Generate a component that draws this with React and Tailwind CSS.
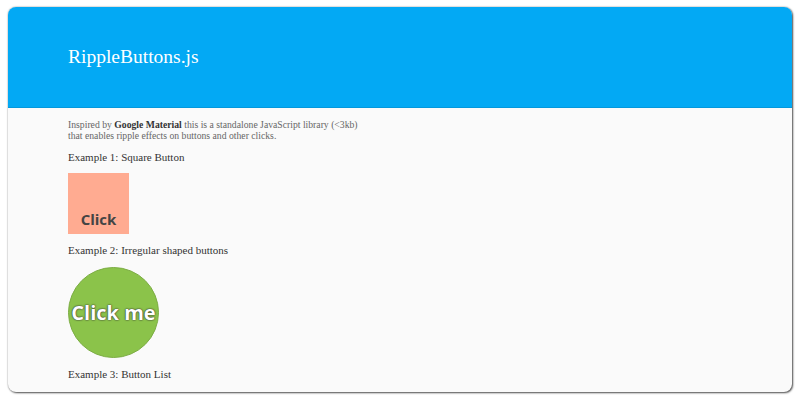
export default function App() {
    return (
        <div className="w-[800px] h-[400px] bg-white pt-[7px] px-[8px]">
            <div className="h-[385px] rounded-[8px] overflow-hidden bg-[#fafafa] shadow-[0_0_2px_rgba(0,0,0,0.35),1px_1px_2px_rgba(0,0,0,0.65)]">
                {/* header */}
                <div className="h-[101px] bg-[#03a9f4] border-b border-[#0398dc] flex items-center pl-[60px]">
                    <h1 className="text-white text-[19.5px] font-['Liberation_Serif',serif]">RippleButtons.js</h1>
                </div>

                <div className="pl-[60px] pt-[11px] font-['Liberation_Serif',serif]">
                    <p className="text-[9.7px] leading-[11px] text-[#666]">
                        Inspired by <b className="text-[#333]">Google Material</b> this is a standalone JavaScript library (&lt;3kb)
                        <br />
                        that enables ripple effects on buttons and other clicks.
                    </p>

                    <h3 className="mt-[9px] text-[11px] leading-[14px] text-[#333]">Example 1: Square Button</h3>
                    <button className="mt-[9px] block w-[61px] h-[61px] bg-[#ffab91] text-[#444] text-[15px] font-bold font-['Open_Sans',sans-serif] pt-[31px]">
                        Click
                    </button>

                    <h3 className="mt-[9px] text-[11px] leading-[14px] text-[#333]">Example 2: Irregular shaped buttons</h3>
                    <button className="mt-[10px] block w-[91px] h-[91px] rounded-full bg-[#8bc34a] border border-[#7cad44] text-white text-[20px] font-bold font-['Open_Sans',sans-serif] [text-shadow:0_0_2px_#333,0_0_1px_#333]">
                        Click me
                    </button>

                    <h3 className="mt-[9px] text-[11px] leading-[14px] text-[#333]">Example 3: Button List</h3>
                </div>
            </div>
        </div>
    );
}
